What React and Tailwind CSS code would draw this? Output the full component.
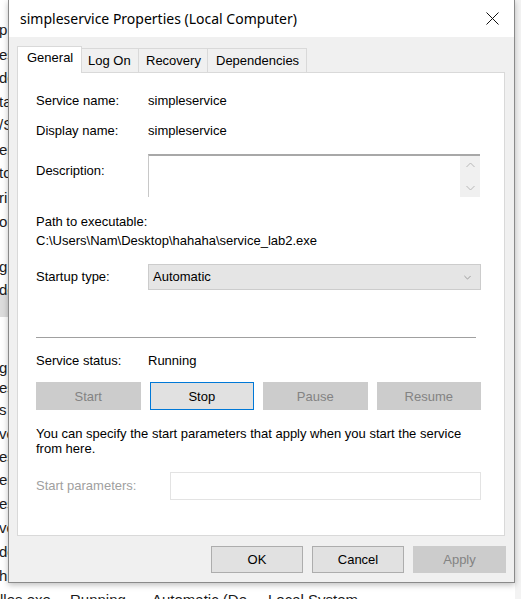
import React from "react";

const bgRows = [
  { y: 22, t: "p" },
  { y: 47, t: "es" },
  { y: 70, t: "de" },
  { y: 94, t: "ta" },
  { y: 117, t: "/S" },
  { y: 142, t: "er" },
  { y: 165, t: "to" },
  { y: 190, t: "ri" },
  { y: 214, t: "or" },
  { y: 259, t: "g" },
  { y: 282, t: "de" },
  { y: 360, t: "g" },
  { y: 380, t: "es" },
  { y: 402, t: "s" },
  { y: 426, t: "ve" },
  { y: 449, t: "es" },
  { y: 472, t: "er" },
  { y: 496, t: "es" },
  { y: 520, t: "ve" },
  { y: 544, t: "de" },
  { y: 568, t: "h" },
];

function Btn({ children, disabled, focused, className = "" }) {
  const base =
    "flex items-center justify-center border text-[13px] leading-none";
  const look = disabled
    ? "bg-[#cccccc] border-[#cccccc] text-[#838383]"
    : focused
    ? "bg-[#e1e1e1] border-[#0078d7] text-black"
    : "bg-[#e1e1e1] border-[#adadad] text-black";
  return <div className={`${base} ${look} ${className}`}>{children}</div>;
}

function Chevron({ up, color = "#b8b8b8", w = 9, h = 6 }) {
  return (
    <svg width={w} height={h} viewBox="0 0 9 6">
      <path
        d={up ? "M0.5 5 L4.5 1 L8.5 5" : "M0.5 1 L4.5 5 L8.5 1"}
        fill="none"
        stroke={color}
        strokeWidth="1"
      />
    </svg>
  );
}

export default function App() {
  return (
    <div
      className="relative w-[521px] h-[599px] overflow-hidden bg-white text-black"
      style={{ fontFamily: '"Liberation Sans", Arial, sans-serif' }}
    >
      {/* services list behind the dialog */}
      <div className="absolute left-0 top-[293px] w-[8px] h-[24px] bg-[#dcdcdc]" />
      {bgRows.map((r) => (
        <div
          key={r.y}
          className="absolute left-[-1px] text-[15px] leading-[16px] text-[#1a1a1a]"
          style={{ top: r.y }}
        >
          {r.t}
        </div>
      ))}
      <div className="absolute left-0 top-[590px] flex whitespace-nowrap text-[15px] leading-[20px] text-[#1a1a1a]">
        <span className="w-[70px]">lles.exe</span>
        <span className="w-[82px]">Running</span>
        <span className="w-[116px]">Automatic (De...</span>
        <span>Local System</span>
      </div>
      <div className="absolute right-0 top-0 w-[6px] h-[599px] bg-[#f3f3f3]" />

      {/* dialog window */}
      <div className="absolute left-[8px] top-0 w-[507px] h-[583px] border-l border-r border-b border-[#8a8a8a] bg-[#f0f0f0] shadow-[0_2px_6px_rgba(0,0,0,0.25)] flex flex-col">
        {/* title bar */}
        <div className="h-[37px] bg-white flex items-center justify-between pl-[11px] pr-[15px]">
          <span
            className="text-[14px] leading-none text-black mt-[1px]"
            style={{ fontFamily: '"Noto Sans", "Open Sans", sans-serif' }}
          >
            simpleservice Properties (Local Computer)
          </span>
          <svg width="13" height="13" viewBox="0 0 13 13">
            <path d="M0.5 0.5 L12.5 12.5 M12.5 0.5 L0.5 12.5" stroke="#111" strokeWidth="1" />
          </svg>
        </div>

        {/* body */}
        <div className="flex-1 flex flex-col pl-[8px] pr-[9px] pt-[9px]">
          {/* tabs */}
          <div className="flex items-end h-[26px] text-[13px] leading-[16px]">
            <div className="h-[27px] w-[65px] bg-white border-t border-l border-r border-[#d9d9d9] pl-[9px] pt-[3px] relative z-10 -mb-px">
              General
            </div>
            <div className="h-[24px] w-[57px] border-t border-r border-[#d9d9d9] pl-[6px] pt-[4px]">
              Log On
            </div>
            <div className="h-[24px] w-[69px] border-t border-r border-[#d9d9d9] pl-[7px] pt-[4px]">
              Recovery
            </div>
            <div className="h-[24px] w-[99px] border-t border-r border-[#d9d9d9] pl-[8px] pt-[4px]">
              Dependencies
            </div>
          </div>

          {/* panel */}
          <div className="h-[464px] bg-white border border-[#d9d9d9] pl-[18px] pt-[20px] text-[13px] leading-[16px]">
            <div className="flex h-[16px]">
              <span className="w-[112px]">Service name:</span>
              <span>simpleservice</span>
            </div>
            <div className="flex h-[16px] mt-[14px]">
              <span className="w-[112px]">Display name:</span>
              <span>simpleservice</span>
            </div>
            <div className="flex mt-[15px]">
              <span className="w-[112px] pt-[9px]">Description:</span>
              <div className="w-[332px] h-[43px] border-t-2 border-l border-t-[#a8a8a8] border-l-[#c8c8c8] flex justify-end">
                <div className="w-[20px] h-full bg-[#f0f0f0] flex flex-col items-center justify-between pt-[6px] pb-[6px]">
                  <Chevron up />
                  <Chevron />
                </div>
              </div>
            </div>
            <div className="mt-[17px]">Path to executable:</div>
            <div className="mt-[3px]">C:\Users\Nam\Desktop\hahaha\service_lab2.exe</div>
            <div className="flex items-center mt-[15px]">
              <span className="w-[112px]">Startup type:</span>
              <div className="w-[333px] h-[26px] bg-[#e5e5e5] border border-[#cccccc] flex items-center justify-between pl-[4px] pr-[9px]">
                <span>Automatic</span>
                <Chevron color="#8a8a8a" w={7} h={5} />
              </div>
            </div>
            <div className="w-[440px] h-px bg-[#a0a0a0] mt-[47px]" />
            <div className="flex mt-[15px]">
              <span className="w-[112px]">Service status:</span>
              <span>Running</span>
            </div>
            <div className="grid grid-cols-4 gap-x-[9px] w-[445px] h-[28px] mt-[13px]">
              <Btn disabled>Start</Btn>
              <Btn focused>Stop</Btn>
              <Btn disabled>Pause</Btn>
              <Btn disabled>Resume</Btn>
            </div>
            <div className="mt-[16px] leading-[15px] w-[450px]">
              You can specify the start parameters that apply when you start the service
              <br />
              from here.
            </div>
            <div className="flex items-center mt-[16px]">
              <span className="w-[134px] text-[#a0a0a0]">Start parameters:</span>
              <div className="w-[311px] h-[28px] bg-white border border-[#e3e3e3]" />
            </div>
          </div>

          {/* dialog buttons */}
          <div className="flex justify-end gap-x-[9px] mt-[10px] mr-[-1px]">
            <Btn className="w-[92px] h-[27px]">OK</Btn>
            <Btn className="w-[92px] h-[27px]">Cancel</Btn>
            <Btn disabled className="w-[93px] h-[27px]">Apply</Btn>
          </div>
        </div>
      </div>
    </div>
  );
}
